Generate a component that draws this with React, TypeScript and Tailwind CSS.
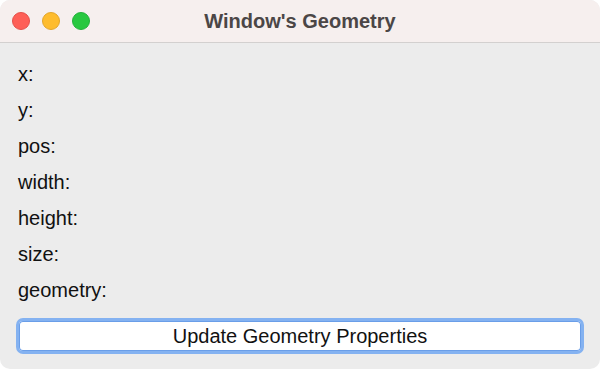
const LABELS = ["x:", "y:", "pos:", "width:", "height:", "size:", "geometry:"];

function TrafficLights() {
  return (
    <div className="flex items-center gap-[12px] pl-[12px]">
      <span className="h-[18px] w-[18px] rounded-full bg-[#fe5f57] border border-[#e5504a]" />
      <span className="h-[18px] w-[18px] rounded-full bg-[#febc2e] border border-[#e3a62a]" />
      <span className="h-[18px] w-[18px] rounded-full bg-[#28c840] border border-[#22b13a]" />
    </div>
  );
}

export default function App() {
  return (
    <div className="h-[369px] w-[600px] bg-white" style={{ fontFamily: '"Liberation Sans", Arial, sans-serif' }}>
      <div className="flex h-full w-full flex-col overflow-hidden rounded-[10px] bg-[#ececec]">
        {/* Title bar */}
        <div className="relative flex h-[43px] shrink-0 items-center border-b border-[#d3d0cf] bg-[#f6efee]">
          <TrafficLights />
          <div className="absolute inset-0 flex items-center justify-center pb-px text-[20px] font-bold text-[#4b4646]">
            Window's Geometry
          </div>
        </div>

        {/* Labels */}
        <div className="flex flex-col px-[18px] pt-[13px]">
          {LABELS.map((label) => (
            <div key={label} className="h-[36px] text-[20px] leading-[36px] text-[#111111]">
              {label}
            </div>
          ))}
        </div>

        {/* Button */}
        <div className="px-[16px] pt-[10px]">
          <button className="flex h-[36px] w-full items-center justify-center rounded-[7px] border-[3px] border-[#84b2f1] bg-white text-[20px] text-[#111111] shadow-[inset_0_0_0_1px_#6a9ee8]">
            Update Geometry Properties
          </button>
        </div>
      </div>
    </div>
  );
}
